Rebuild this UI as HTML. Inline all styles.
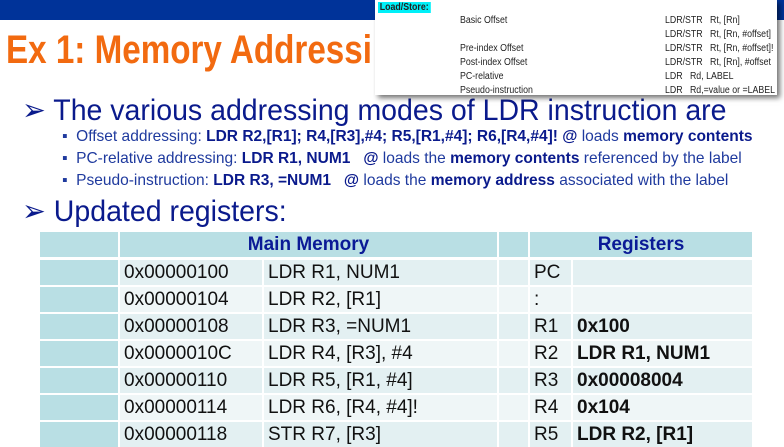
<!DOCTYPE html>
<html><head><style>
*{margin:0;padding:0;box-sizing:border-box}
body{width:784px;height:441px;overflow:hidden;background:#fff;position:relative;font-family:"Liberation Sans",sans-serif}
.band{position:absolute;left:0;top:0;width:784px;height:20px;background:#003399}
.t{position:absolute;white-space:nowrap;transform-origin:0 0}
.title{left:6px;top:28px;font-size:40px;font-weight:bold;color:#f26a10;transform:scaleX(0.83)}
.pop{position:absolute;z-index:5;left:375px;top:0;width:402px;height:95px;background:#fff;box-shadow:3px 3px 5px rgba(0,0,0,.55);font-size:10px;color:#222}
.pop div{position:absolute;white-space:nowrap;transform:scaleX(.88);transform-origin:0 0}
.h1{font-size:30px;color:#0a1a8c}
.b{font-size:16px;color:#1f3a9e}
.b b{color:#0a1a8c}
.tbl{position:absolute;left:40px;top:232px}
.c{position:absolute;height:25px;font-size:19px;color:#111;padding-left:4px;line-height:25px;white-space:nowrap}
.hd{background:#b9dfe4;color:#0a1a96;font-weight:bold;text-align:center;padding:0}
.k{background:#b9dfe4}
</style></head><body>
<div class="band"></div>
<div class="t title">Ex 1: Memory Addressi</div>
<div class="pop">
<div style="left:3px;top:2px;background:#00f0f8;font-weight:bold;padding:0 2px">Load/Store:</div>
<div style="left:85px;top:15px">Basic Offset</div><div style="left:290px;top:15px">LDR/STR&nbsp;&nbsp;&nbsp;Rt, [Rn]</div>
<div style="left:290px;top:29px">LDR/STR&nbsp;&nbsp;&nbsp;Rt, [Rn, #offset]</div>
<div style="left:85px;top:43px">Pre-index Offset</div><div style="left:290px;top:43px">LDR/STR&nbsp;&nbsp;&nbsp;Rt, [Rn, #offset]!</div>
<div style="left:85px;top:57px">Post-index Offset</div><div style="left:290px;top:57px">LDR/STR&nbsp;&nbsp;&nbsp;Rt, [Rn], #offset</div>
<div style="left:85px;top:71px">PC-relative</div><div style="left:290px;top:71px">LDR&nbsp;&nbsp;&nbsp;Rd, LABEL</div>
<div style="left:85px;top:85px">Pseudo-instruction</div><div style="left:290px;top:85px">LDR&nbsp;&nbsp;&nbsp;Rd,=value or =LABEL</div>
</div>
<div class="t h1" style="left:22px;top:93px;transform:scaleX(.95)">➢ The various addressing modes of LDR instruction are</div>
<div class="t b" style="left:62px;top:128px;transform:scaleX(.97)">▪&nbsp; Offset addressing: <b>LDR R2,[R1]; R4,[R3],#4; R5,[R1,#4]; R6,[R4,#4]! @</b> loads <b>memory contents</b></div>
<div class="t b" style="left:62px;top:150px;transform:scaleX(.97)">▪&nbsp; PC-relative addressing: <b>LDR R1, NUM1&nbsp;&nbsp; @</b> loads the <b>memory contents</b> referenced by the label</div>
<div class="t b" style="left:62px;top:172px;transform:scaleX(.97)">▪&nbsp; Pseudo-instruction: <b>LDR R3, =NUM1&nbsp;&nbsp; @</b> loads the <b>memory address</b> associated with the label</div>
<div class="t h1" style="left:22px;top:194px;transform:scaleX(.95)">➢ Updated registers:</div>
<div class="tbl">
<div class="c hd" style="left:0;top:0;width:78px"></div>
<div class="c hd" style="left:80px;top:0;width:377px">Main Memory</div>
<div class="c hd" style="left:459px;top:0;width:29px"></div>
<div class="c hd" style="left:490px;top:0;width:222px">Registers</div>
</div>
<div class="tbl" id="rows"></div>
<script>
var d=[["0x00000100","LDR R1, NUM1","PC",""],["0x00000104","LDR R2, [R1]",":",""],["0x00000108","LDR R3, =NUM1","R1","0x100"],["0x0000010C","LDR R4, [R3], #4","R2","LDR R1, NUM1"],["0x00000110","LDR R5, [R1, #4]","R3","0x00008004"],["0x00000114","LDR R6, [R4, #4]!","R4","0x104"],["0x00000118","STR R7, [R3]","R5","LDR R2, [R1]"]];
var h="";
d.forEach(function(r,i){var y=28+i*27;var bg=i%2?"#eff6f7":"#e3f0f2";
h+='<div class="c k" style="left:0;top:'+y+'px;width:78px"></div>';
h+='<div class="c" style="left:80px;top:'+y+'px;width:142px;background:'+bg+'">'+r[0]+'</div>';
h+='<div class="c" style="left:224px;top:'+y+'px;width:233px;background:'+bg+'">'+r[1]+'</div>';
h+='<div class="c" style="left:459px;top:'+y+'px;width:29px;background:'+bg+'"></div>';
h+='<div class="c" style="left:490px;top:'+y+'px;width:41px;background:'+bg+'">'+r[2]+'</div>';
h+='<div class="c" style="left:533px;top:'+y+'px;width:179px;background:'+bg+';font-weight:bold">'+r[3]+'</div>';});
document.getElementById("rows").innerHTML=h;
</script>
</body></html>
